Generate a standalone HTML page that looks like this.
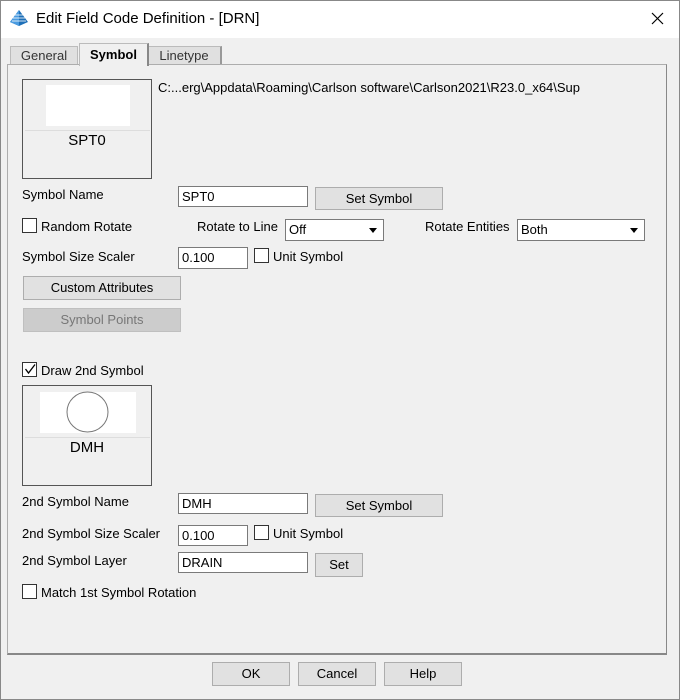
<!DOCTYPE html>
<html><head><style>
*{box-sizing:border-box}
body{margin:0;width:680px;height:700px;background:#f0f0f0;font-family:"Liberation Sans",sans-serif;font-size:13px;color:#000;position:relative;overflow:hidden}
.a{position:absolute;white-space:nowrap}
.win{position:absolute;left:0;top:0;width:680px;height:700px;border:1px solid #888}
.title{position:absolute;left:1px;top:1px;width:678px;height:37px;background:#fff}
.btn{position:absolute;background:#e1e1e1;border:1px solid #adadad;text-align:center;line-height:21px}
.inp{position:absolute;background:#fff;border:1px solid #7a7a7a;padding-left:3px;line-height:19px}
.cb{position:absolute;width:15px;height:15px;border:1px solid #333;background:#fff}
.prev{position:absolute;border:1px solid #555;background:#f0f0f0}
.sel{position:absolute;background:#fff;border:1px solid #7a7a7a;padding-left:3px;line-height:20px}
.sel .ar{position:absolute;right:1px;top:1px;width:18px;height:18px;background:#fff}
.sel .ar:after{content:"";position:absolute;left:5px;top:7px;border-left:4px solid transparent;border-right:4px solid transparent;border-top:5px solid #000}
</style></head><body>
<div class="win"></div>
<div class="title"></div>
<svg class="a" style="left:9px;top:9px" width="20" height="18" viewBox="0 0 20 18"><polygon points="10,1 19,13 10,17 1,13" fill="#1d6fb8"/><polygon points="10,1 10,17 1,13" fill="#4a9be0"/><line x1="4" y1="9" x2="16" y2="9" stroke="#fff" stroke-width=".8"/><line x1="6" y1="6" x2="14" y2="6" stroke="#fff" stroke-width=".8"/><line x1="3" y1="12" x2="17" y2="12" stroke="#fff" stroke-width=".8"/></svg>
<div class="a" style="left:36px;top:10px;font-size:15px">Edit Field Code Definition - [DRN]</div>
<svg class="a" style="left:651px;top:12px" width="13" height="13"><path d="M1 1L12 12M12 1L1 12" stroke="#000" stroke-width="1.2"/></svg>

<div class="a" style="left:7px;top:64px;width:660px;height:591px;border:1px solid #adadad;border-right-color:#888;border-bottom:2px solid #888;background:#f0f0f0"></div>
<div class="a" style="left:10px;top:46px;width:68px;height:18px;background:#e0e0e0;border:1px solid #bbb;border-bottom:none;text-align:center;line-height:17px;color:#333">General</div>
<div class="a" style="left:147px;top:46px;width:75px;height:18px;background:#e0e0e0;border:1px solid #bbb;border-bottom:none;border-right:2px solid #999;text-align:center;line-height:17px;color:#333">Linetype</div>
<div class="a" style="left:79px;top:43px;width:70px;height:23px;background:#f0f0f0;border:1px solid #bbb;border-bottom:none;border-right:2px solid #888;text-align:center;line-height:22px;font-weight:bold">Symbol</div>

<div class="prev" style="left:22px;top:79px;width:130px;height:100px"></div>
<div class="a" style="left:46px;top:85px;width:84px;height:41px;background:#fff"></div>
<div class="a" style="left:25px;top:130px;width:125px;height:1px;background:#ddd"></div>
<div class="a" style="left:22px;top:132px;width:130px;text-align:center;font-size:15px">SPT0</div>
<div class="a" style="left:158px;top:80px">C:...erg\Appdata\Roaming\Carlson software\Carlson2021\R23.0_x64\Sup</div>

<div class="a" style="left:22px;top:187px">Symbol Name</div>
<div class="inp" style="left:178px;top:186px;width:130px;height:21px">SPT0</div>
<div class="btn" style="left:315px;top:187px;width:128px;height:23px">Set Symbol</div>

<div class="cb" style="left:22px;top:218px"></div>
<div class="a" style="left:41px;top:219px">Random Rotate</div>
<div class="a" style="left:197px;top:219px">Rotate to Line</div>
<div class="sel" style="left:285px;top:219px;width:99px;height:22px">Off<div class="ar"></div></div>
<div class="a" style="left:425px;top:219px">Rotate Entities</div>
<div class="sel" style="left:517px;top:219px;width:128px;height:22px">Both<div class="ar"></div></div>

<div class="a" style="left:22px;top:249px">Symbol Size Scaler</div>
<div class="inp" style="left:178px;top:247px;width:70px;height:22px">0.100</div>
<div class="cb" style="left:254px;top:248px"></div>
<div class="a" style="left:273px;top:249px">Unit Symbol</div>

<div class="btn" style="left:23px;top:276px;width:158px;height:24px">Custom Attributes</div>
<div class="btn" style="left:23px;top:308px;width:158px;height:24px;background:#ccc;border-color:#bfbfbf;color:#777">Symbol Points</div>

<div class="cb" style="left:22px;top:362px"></div>
<svg class="a" style="left:24px;top:363px" width="12" height="12"><polyline points="1.5,6 4.5,10 11,1.5" fill="none" stroke="#000" stroke-width="1.3"/></svg>
<div class="a" style="left:41px;top:363px">Draw 2nd Symbol</div>

<div class="prev" style="left:22px;top:385px;width:130px;height:101px"></div>
<div class="a" style="left:40px;top:392px;width:96px;height:41px;background:#fff"></div>
<svg class="a" style="left:66px;top:391px" width="44" height="43"><ellipse cx="21.5" cy="21" rx="20.5" ry="20" fill="none" stroke="#777"/></svg>
<div class="a" style="left:25px;top:437px;width:125px;height:1px;background:#ddd"></div>
<div class="a" style="left:22px;top:439px;width:130px;text-align:center;font-size:15px">DMH</div>

<div class="a" style="left:22px;top:494px">2nd Symbol Name</div>
<div class="inp" style="left:178px;top:493px;width:130px;height:21px">DMH</div>
<div class="btn" style="left:315px;top:494px;width:128px;height:23px">Set Symbol</div>

<div class="a" style="left:22px;top:526px">2nd Symbol Size Scaler</div>
<div class="inp" style="left:178px;top:525px;width:70px;height:21px">0.100</div>
<div class="cb" style="left:254px;top:525px"></div>
<div class="a" style="left:273px;top:526px">Unit Symbol</div>

<div class="a" style="left:22px;top:553px">2nd Symbol Layer</div>
<div class="inp" style="left:178px;top:552px;width:130px;height:21px">DRAIN</div>
<div class="btn" style="left:315px;top:553px;width:48px;height:24px">Set</div>

<div class="cb" style="left:22px;top:584px"></div>
<div class="a" style="left:41px;top:585px">Match 1st Symbol Rotation</div>

<div class="btn" style="left:212px;top:662px;width:78px;height:24px">OK</div>
<div class="btn" style="left:298px;top:662px;width:78px;height:24px">Cancel</div>
<div class="btn" style="left:384px;top:662px;width:78px;height:24px">Help</div>
</body></html>
